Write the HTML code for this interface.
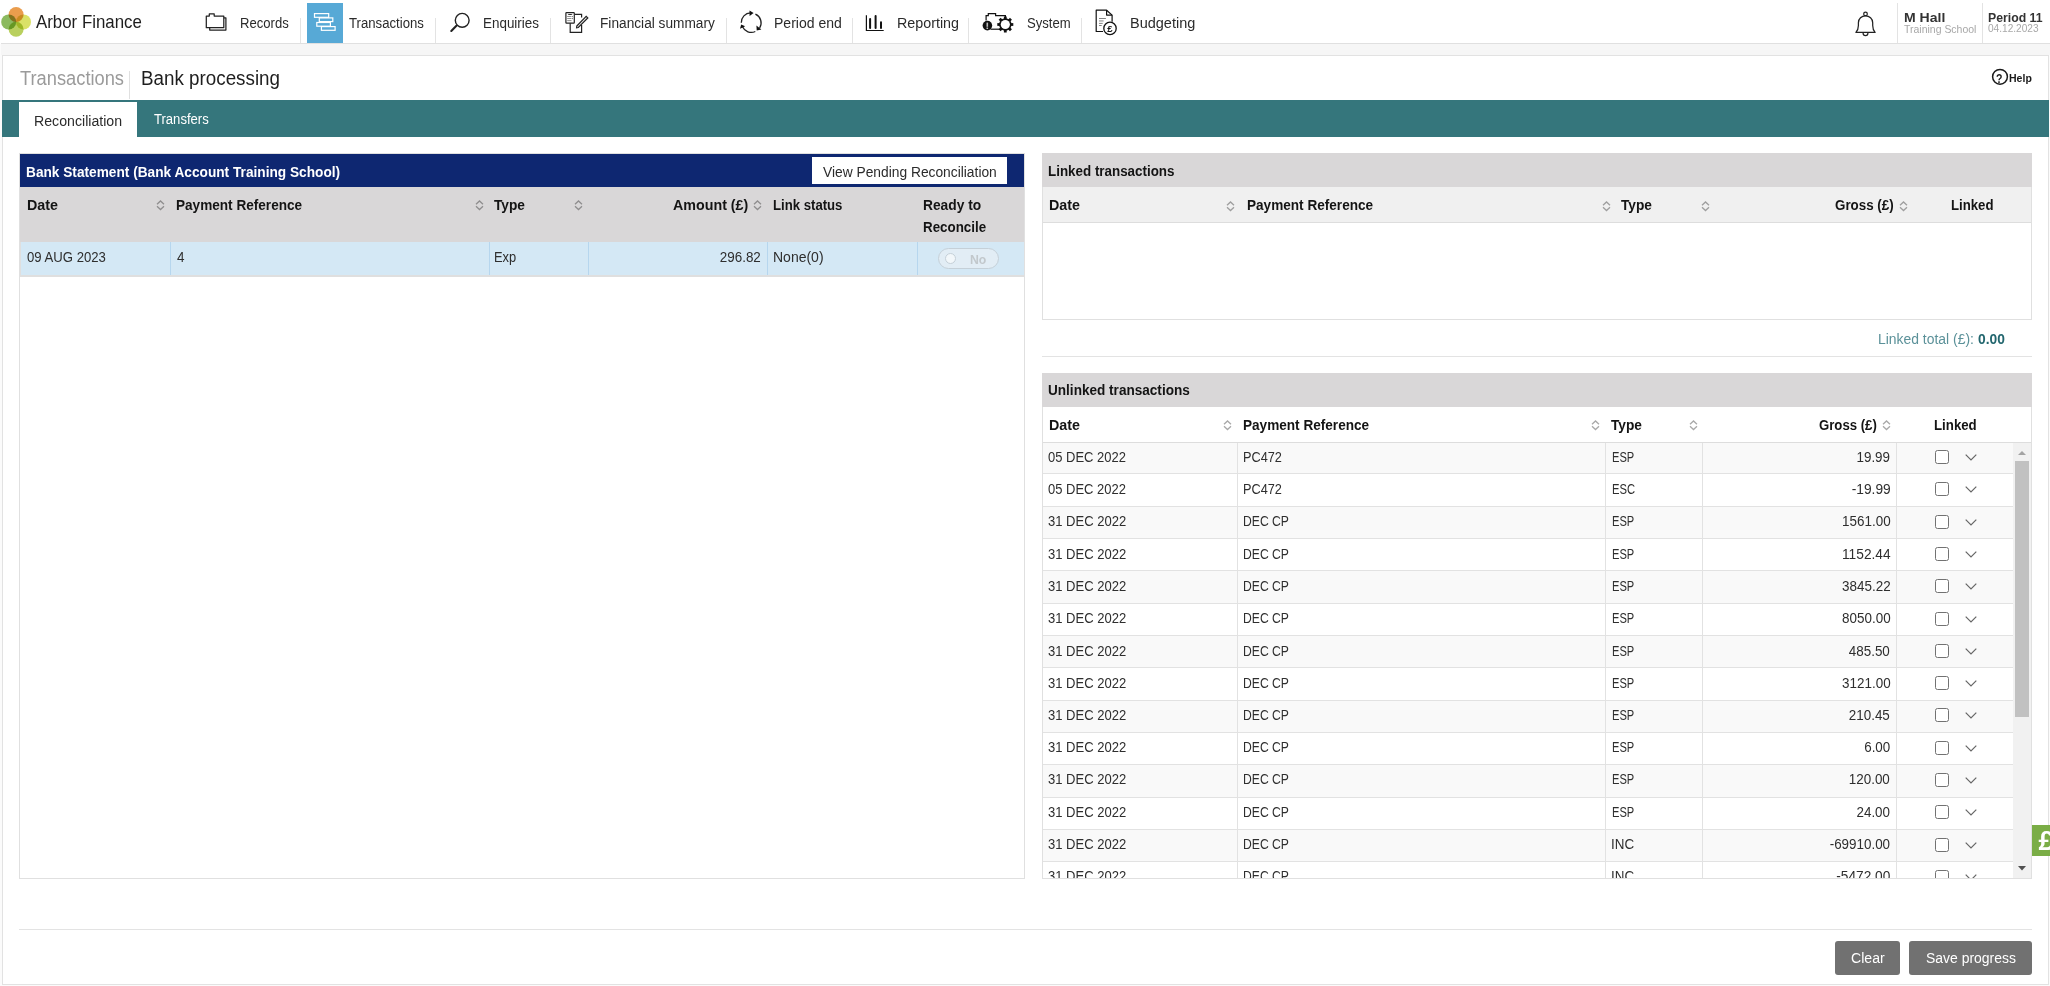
<!DOCTYPE html>
<html><head><meta charset="utf-8"><title>Bank processing</title>
<style>
html,body{margin:0;padding:0;width:2050px;height:986px;overflow:hidden;font-family:'Liberation Sans', sans-serif;}
body{position:relative;background:#ffffff}
</style></head><body>
<div style="position:absolute;left:0px;top:0px;width:2050px;height:43px;background:#ffffff;"></div>
<div style="position:absolute;left:1px;top:43px;width:2049px;height:1px;background:#e0e0e0;"></div>
<svg style="position:absolute;left:0;top:0" width="34" height="40" viewBox="0 0 34 40">
<circle cx="16.1" cy="14.5" r="7.5" fill="#e8923a" style="mix-blend-mode:multiply" fill-opacity="0.9"/>
<circle cx="8.7" cy="21.9" r="7.5" fill="#7fb34e" style="mix-blend-mode:multiply" fill-opacity="0.9"/>
<circle cx="23.5" cy="21.9" r="7.5" fill="#d6de56" style="mix-blend-mode:multiply" fill-opacity="0.9"/>
<circle cx="16.1" cy="29.3" r="7.5" fill="#b1cb4c" style="mix-blend-mode:multiply" fill-opacity="0.9"/>
</svg>
<div style="position:absolute;top:13px;font:400 18.5px/18.5px 'Liberation Sans', sans-serif;color:#1e1e1e;white-space:nowrap;transform:scaleX(0.9111);left:35.60px;transform-origin:0 0;">Arbor Finance</div>
<div style="position:absolute;left:300px;top:18px;width:1px;height:25px;background:#e3e3e3;"></div>
<div style="position:absolute;left:435px;top:18px;width:1px;height:25px;background:#e3e3e3;"></div>
<div style="position:absolute;left:550px;top:18px;width:1px;height:25px;background:#e3e3e3;"></div>
<div style="position:absolute;left:726px;top:18px;width:1px;height:25px;background:#e3e3e3;"></div>
<div style="position:absolute;left:852px;top:18px;width:1px;height:25px;background:#e3e3e3;"></div>
<div style="position:absolute;left:968px;top:18px;width:1px;height:25px;background:#e3e3e3;"></div>
<div style="position:absolute;left:1081px;top:18px;width:1px;height:25px;background:#e3e3e3;"></div>
<div style="position:absolute;left:307px;top:3px;width:36px;height:40px;background:#57a9d6;"></div>
<div style="position:absolute;top:16px;font:400 14px/14px 'Liberation Sans', sans-serif;color:#2b2b2b;white-space:nowrap;transform:scaleX(0.9349);left:239.97px;transform-origin:0 0;">Records</div>
<div style="position:absolute;top:16px;font:400 14px/14px 'Liberation Sans', sans-serif;color:#2b2b2b;white-space:nowrap;transform:scaleX(0.9407);left:348.50px;transform-origin:0 0;">Transactions</div>
<div style="position:absolute;top:16px;font:400 14px/14px 'Liberation Sans', sans-serif;color:#2b2b2b;white-space:nowrap;transform:scaleX(0.9588);left:483.04px;transform-origin:0 0;">Enquiries</div>
<div style="position:absolute;top:16px;font:400 14px/14px 'Liberation Sans', sans-serif;color:#2b2b2b;white-space:nowrap;transform:scaleX(0.9779);left:600.22px;transform-origin:0 0;">Financial summary</div>
<div style="position:absolute;top:16px;font:400 14px/14px 'Liberation Sans', sans-serif;color:#2b2b2b;white-space:nowrap;transform:scaleX(1.0011);left:773.50px;transform-origin:0 0;">Period end</div>
<div style="position:absolute;top:16px;font:400 14px/14px 'Liberation Sans', sans-serif;color:#2b2b2b;white-space:nowrap;transform:scaleX(1.0218);left:896.58px;transform-origin:0 0;">Reporting</div>
<div style="position:absolute;top:16px;font:400 14px/14px 'Liberation Sans', sans-serif;color:#2b2b2b;white-space:nowrap;transform:scaleX(0.9367);left:1027.20px;transform-origin:0 0;">System</div>
<div style="position:absolute;top:16px;font:400 14px/14px 'Liberation Sans', sans-serif;color:#2b2b2b;white-space:nowrap;transform:scaleX(1.0348);left:1129.57px;transform-origin:0 0;">Budgeting</div>
<div style="position:absolute;left:1897px;top:3px;width:1px;height:40px;background:#e3e3e3;"></div>
<div style="position:absolute;left:1982px;top:3px;width:1px;height:40px;background:#e3e3e3;"></div>
<div style="position:absolute;top:11px;font:700 13.5px/13.5px 'Liberation Sans', sans-serif;color:#333;white-space:nowrap;transform:scaleX(1.0383);left:1904.00px;transform-origin:0 0;">M Hall</div>
<div style="position:absolute;top:24px;font:400 11px/11px 'Liberation Sans', sans-serif;color:#a8a8a8;white-space:nowrap;transform:scaleX(0.9527);left:1904.00px;transform-origin:0 0;">Training School</div>
<div style="position:absolute;top:11px;font:700 13.5px/13.5px 'Liberation Sans', sans-serif;color:#333;white-space:nowrap;transform:scaleX(0.9087);left:1988.30px;transform-origin:0 0;">Period 11</div>
<div style="position:absolute;top:23px;font:400 10.5px/10.5px 'Liberation Sans', sans-serif;color:#a8a8a8;white-space:nowrap;transform:scaleX(0.9618);left:1988.30px;transform-origin:0 0;">04.12.2023</div>
<div style="position:absolute;left:0px;top:44px;width:2050px;height:942px;background:#fbfbfb;"></div>
<div style="position:absolute;left:1px;top:44px;width:2049px;height:11px;background:#f6f6f6;"></div>
<div style="position:absolute;left:2px;top:55px;width:2047px;height:930px;background:#ffffff;box-sizing:border-box;border:1px solid #e2e2e2"></div>
<div style="position:absolute;top:68px;font:400 20px/20px 'Liberation Sans', sans-serif;color:#9b9b9b;white-space:nowrap;transform:scaleX(0.9143);left:19.50px;transform-origin:0 0;">Transactions</div>
<div style="position:absolute;left:129px;top:71px;width:1px;height:28px;background:#e0e0e0;"></div>
<div style="position:absolute;top:68px;font:400 20px/20px 'Liberation Sans', sans-serif;color:#1e1e1e;white-space:nowrap;transform:scaleX(0.9400);left:141.46px;transform-origin:0 0;">Bank processing</div>
<svg style="position:absolute;left:1990px;top:66px" width="20" height="21" viewBox="0 0 20 21"><circle cx="10" cy="10.8" r="7.4" fill="none" stroke="#1a1a1a" stroke-width="1.5"/></svg>
<div style="position:absolute;top:71.5px;font:700 13px/13px 'Liberation Sans', sans-serif;color:#1a1a1a;white-space:nowrap;transform:scaleX(0.8125);left:1996.30px;transform-origin:0 0;">?</div>
<div style="position:absolute;top:73px;font:700 11px/11px 'Liberation Sans', sans-serif;color:#1a1a1a;white-space:nowrap;transform:scaleX(0.9578);left:2008.50px;transform-origin:0 0;">Help</div>
<div style="position:absolute;left:2px;top:100px;width:2047px;height:37px;background:#35767c;"></div>
<div style="position:absolute;left:19px;top:102px;width:118px;height:35px;background:#ffffff;"></div>
<div style="position:absolute;top:114px;font:400 14px/14px 'Liberation Sans', sans-serif;color:#2b2b2b;white-space:nowrap;transform:scaleX(1.0109);left:34.29px;transform-origin:0 0;">Reconciliation</div>
<div style="position:absolute;top:112px;font:400 14px/14px 'Liberation Sans', sans-serif;color:#ffffff;white-space:nowrap;transform:scaleX(0.9334);left:154.40px;transform-origin:0 0;">Transfers</div>
<div style="position:absolute;left:19px;top:153px;width:1006px;height:726px;background:#ffffff;box-sizing:border-box;border:1px solid #e0e0e0"></div>
<div style="position:absolute;left:20px;top:154px;width:1004px;height:33px;background:#0e2771;"></div>
<div style="position:absolute;top:165px;font:700 14px/14px 'Liberation Sans', sans-serif;color:#ffffff;white-space:nowrap;transform:scaleX(0.9770);left:25.90px;transform-origin:0 0;">Bank Statement (Bank Account Training School)</div>
<div style="position:absolute;left:812px;top:157px;width:195px;height:27px;background:#ffffff;"></div>
<div style="position:absolute;top:165px;font:400 14px/14px 'Liberation Sans', sans-serif;color:#2b2b2b;white-space:nowrap;transform:scaleX(0.9851);left:823.30px;transform-origin:0 0;">View Pending Reconciliation</div>
<div style="position:absolute;left:20px;top:187px;width:1004px;height:55px;background:#d9d7d8;"></div>
<div style="position:absolute;top:198px;font:700 14px/14px 'Liberation Sans', sans-serif;color:#141414;white-space:nowrap;transform:scaleX(1.0211);left:26.90px;transform-origin:0 0;">Date</div>
<div style="position:absolute;top:198px;font:700 14px/14px 'Liberation Sans', sans-serif;color:#141414;white-space:nowrap;transform:scaleX(0.9703);left:175.80px;transform-origin:0 0;">Payment Reference</div>
<div style="position:absolute;top:198px;font:700 14px/14px 'Liberation Sans', sans-serif;color:#141414;white-space:nowrap;transform:scaleX(0.9796);left:494.00px;transform-origin:0 0;">Type</div>
<div style="position:absolute;top:198px;font:700 14px/14px 'Liberation Sans', sans-serif;color:#141414;white-space:nowrap;transform:scaleX(1.0189);left:672.70px;transform-origin:0 0;">Amount (£)</div>
<div style="position:absolute;top:198px;font:700 14px/14px 'Liberation Sans', sans-serif;color:#141414;white-space:nowrap;transform:scaleX(0.9394);left:772.80px;transform-origin:0 0;">Link status</div>
<div style="position:absolute;top:198px;font:700 14px/14px 'Liberation Sans', sans-serif;color:#141414;white-space:nowrap;transform:scaleX(0.9843);left:922.70px;transform-origin:0 0;">Ready to</div>
<div style="position:absolute;top:220px;font:700 14px/14px 'Liberation Sans', sans-serif;color:#141414;white-space:nowrap;transform:scaleX(0.9539);left:922.70px;transform-origin:0 0;">Reconcile</div>
<svg style="position:absolute;left:155.8px;top:200px" width="9" height="11" viewBox="0 0 9 11"><path d="M1 4.3 L4.5 1 L8 4.3 M1 6.3 L4.5 9.5 L8 6.3" fill="none" stroke="rgba(0,0,0,0.34)" stroke-width="1.3"/></svg>
<svg style="position:absolute;left:475.0px;top:200px" width="9" height="11" viewBox="0 0 9 11"><path d="M1 4.3 L4.5 1 L8 4.3 M1 6.3 L4.5 9.5 L8 6.3" fill="none" stroke="rgba(0,0,0,0.34)" stroke-width="1.3"/></svg>
<svg style="position:absolute;left:574.2px;top:200px" width="9" height="11" viewBox="0 0 9 11"><path d="M1 4.3 L4.5 1 L8 4.3 M1 6.3 L4.5 9.5 L8 6.3" fill="none" stroke="rgba(0,0,0,0.34)" stroke-width="1.3"/></svg>
<svg style="position:absolute;left:753.0px;top:200px" width="9" height="11" viewBox="0 0 9 11"><path d="M1 4.3 L4.5 1 L8 4.3 M1 6.3 L4.5 9.5 L8 6.3" fill="none" stroke="rgba(0,0,0,0.34)" stroke-width="1.3"/></svg>
<div style="position:absolute;left:20px;top:242px;width:1004px;height:33px;background:#d4e8f5;"></div>
<div style="position:absolute;left:20px;top:275px;width:1004px;height:2px;background:#dfdfdf;"></div>
<div style="position:absolute;left:20px;top:242px;width:1px;height:35px;background:#dfdfdf;"></div>
<div style="position:absolute;left:170px;top:242px;width:1px;height:33px;background:#b6d6ee;"></div>
<div style="position:absolute;left:489px;top:242px;width:1px;height:33px;background:#b6d6ee;"></div>
<div style="position:absolute;left:588px;top:242px;width:1px;height:33px;background:#b6d6ee;"></div>
<div style="position:absolute;left:767px;top:242px;width:1px;height:33px;background:#b6d6ee;"></div>
<div style="position:absolute;left:917px;top:242px;width:1px;height:33px;background:#b6d6ee;"></div>
<div style="position:absolute;top:250px;font:400 14px/14px 'Liberation Sans', sans-serif;color:#2e2e2e;white-space:nowrap;transform:scaleX(0.9383);left:26.50px;transform-origin:0 0;">09 AUG 2023</div>
<div style="position:absolute;top:250px;font:400 14px/14px 'Liberation Sans', sans-serif;color:#2e2e2e;white-space:nowrap;transform:scaleX(0.9638);left:176.50px;transform-origin:0 0;">4</div>
<div style="position:absolute;top:250px;font:400 14px/14px 'Liberation Sans', sans-serif;color:#2e2e2e;white-space:nowrap;transform:scaleX(0.9198);left:494.38px;transform-origin:0 0;">Exp</div>
<div style="position:absolute;top:250px;font:400 14px/14px 'Liberation Sans', sans-serif;color:#2e2e2e;white-space:nowrap;transform:scaleX(0.9586);left:717.97px;transform-origin:42.82px 0;">296.82</div>
<div style="position:absolute;top:250px;font:400 14px/14px 'Liberation Sans', sans-serif;color:#2e2e2e;white-space:nowrap;transform:scaleX(0.9997);left:772.70px;transform-origin:0 0;">None(0)</div>
<div style="position:absolute;left:938px;top:248px;width:61px;height:21px;box-sizing:border-box;border:1px solid #c5d0d8;border-radius:10.5px;background:#e2edf5"></div>
<div style="position:absolute;left:944.5px;top:253px;width:11px;height:11px;box-sizing:border-box;border:1px solid #c5d0d8;border-radius:50%;background:#f2f7fa"></div>
<div style="position:absolute;top:253px;font:700 13px/13px 'Liberation Sans', sans-serif;color:#c2c8cc;white-space:nowrap;transform:scaleX(0.9432);left:970.20px;transform-origin:0 0;">No</div>
<div style="position:absolute;left:1042px;top:153px;width:990px;height:167px;background:#ffffff;box-sizing:border-box;border:1px solid #e0e0e0"></div>
<div style="position:absolute;left:1042px;top:153px;width:990px;height:34px;background:#d9d7d8;"></div>
<div style="position:absolute;top:164px;font:700 14px/14px 'Liberation Sans', sans-serif;color:#141414;white-space:nowrap;transform:scaleX(0.9565);left:1047.50px;transform-origin:0 0;">Linked transactions</div>
<div style="position:absolute;left:1043px;top:187px;width:988px;height:35px;background:#f0f0f0;"></div>
<div style="position:absolute;left:1043px;top:222px;width:988px;height:1px;background:#dddddd;"></div>
<div style="position:absolute;top:198px;font:700 14px/14px 'Liberation Sans', sans-serif;color:#141414;white-space:nowrap;transform:scaleX(1.0211);left:1048.70px;transform-origin:0 0;">Date</div>
<div style="position:absolute;top:198px;font:700 14px/14px 'Liberation Sans', sans-serif;color:#141414;white-space:nowrap;transform:scaleX(0.9703);left:1246.50px;transform-origin:0 0;">Payment Reference</div>
<div style="position:absolute;top:198px;font:700 14px/14px 'Liberation Sans', sans-serif;color:#141414;white-space:nowrap;transform:scaleX(0.9796);left:1621.40px;transform-origin:0 0;">Type</div>
<div style="position:absolute;top:198px;font:700 14px/14px 'Liberation Sans', sans-serif;color:#141414;white-space:nowrap;transform:scaleX(0.9540);left:1834.50px;transform-origin:0 0;">Gross (£)</div>
<div style="position:absolute;top:198px;font:700 14px/14px 'Liberation Sans', sans-serif;color:#141414;white-space:nowrap;transform:scaleX(0.9424);left:1951.00px;transform-origin:0 0;">Linked</div>
<svg style="position:absolute;left:1225.9px;top:200.5px" width="9" height="11" viewBox="0 0 9 11"><path d="M1 4.3 L4.5 1 L8 4.3 M1 6.3 L4.5 9.5 L8 6.3" fill="none" stroke="rgba(0,0,0,0.34)" stroke-width="1.3"/></svg>
<svg style="position:absolute;left:1602.3px;top:200.5px" width="9" height="11" viewBox="0 0 9 11"><path d="M1 4.3 L4.5 1 L8 4.3 M1 6.3 L4.5 9.5 L8 6.3" fill="none" stroke="rgba(0,0,0,0.34)" stroke-width="1.3"/></svg>
<svg style="position:absolute;left:1701.4px;top:200.5px" width="9" height="11" viewBox="0 0 9 11"><path d="M1 4.3 L4.5 1 L8 4.3 M1 6.3 L4.5 9.5 L8 6.3" fill="none" stroke="rgba(0,0,0,0.34)" stroke-width="1.3"/></svg>
<svg style="position:absolute;left:1898.7px;top:200.5px" width="9" height="11" viewBox="0 0 9 11"><path d="M1 4.3 L4.5 1 L8 4.3 M1 6.3 L4.5 9.5 L8 6.3" fill="none" stroke="rgba(0,0,0,0.34)" stroke-width="1.3"/></svg>
<div style="position:absolute;top:332px;font:400 14px/14px 'Liberation Sans', sans-serif;color:#5b9199;white-space:nowrap;transform:scaleX(0.9936);left:1877.81px;transform-origin:0 0;">Linked total (£):</div>
<div style="position:absolute;top:332px;font:700 14px/14px 'Liberation Sans', sans-serif;color:#22666e;white-space:nowrap;transform:scaleX(0.9832);left:1977.50px;transform-origin:0 0;">0.00</div>
<div style="position:absolute;left:1042px;top:356px;width:990px;height:1px;background:#e3e3e3;"></div>
<div style="position:absolute;left:1042px;top:373px;width:990px;height:506px;background:#ffffff;box-sizing:border-box;border:1px solid #e0e0e0"></div>
<div style="position:absolute;left:1042px;top:373px;width:990px;height:34px;background:#d9d7d8;"></div>
<div style="position:absolute;top:383px;font:700 14px/14px 'Liberation Sans', sans-serif;color:#141414;white-space:nowrap;transform:scaleX(0.9695);left:1047.80px;transform-origin:0 0;">Unlinked transactions</div>
<div style="position:absolute;left:1043px;top:442px;width:988px;height:1px;background:#dddddd;"></div>
<div style="position:absolute;top:418px;font:700 14px/14px 'Liberation Sans', sans-serif;color:#141414;white-space:nowrap;transform:scaleX(1.0211);left:1048.70px;transform-origin:0 0;">Date</div>
<div style="position:absolute;top:418px;font:700 14px/14px 'Liberation Sans', sans-serif;color:#141414;white-space:nowrap;transform:scaleX(0.9703);left:1243.10px;transform-origin:0 0;">Payment Reference</div>
<div style="position:absolute;top:418px;font:700 14px/14px 'Liberation Sans', sans-serif;color:#141414;white-space:nowrap;transform:scaleX(0.9796);left:1611.10px;transform-origin:0 0;">Type</div>
<div style="position:absolute;top:418px;font:700 14px/14px 'Liberation Sans', sans-serif;color:#141414;white-space:nowrap;transform:scaleX(0.9408);left:1818.70px;transform-origin:0 0;">Gross (£)</div>
<div style="position:absolute;top:418px;font:700 14px/14px 'Liberation Sans', sans-serif;color:#141414;white-space:nowrap;transform:scaleX(0.9469);left:1933.80px;transform-origin:0 0;">Linked</div>
<svg style="position:absolute;left:1222.7px;top:420.3px" width="9" height="11" viewBox="0 0 9 11"><path d="M1 4.3 L4.5 1 L8 4.3 M1 6.3 L4.5 9.5 L8 6.3" fill="none" stroke="rgba(0,0,0,0.34)" stroke-width="1.3"/></svg>
<svg style="position:absolute;left:1591.4px;top:420.3px" width="9" height="11" viewBox="0 0 9 11"><path d="M1 4.3 L4.5 1 L8 4.3 M1 6.3 L4.5 9.5 L8 6.3" fill="none" stroke="rgba(0,0,0,0.34)" stroke-width="1.3"/></svg>
<svg style="position:absolute;left:1688.5px;top:420.3px" width="9" height="11" viewBox="0 0 9 11"><path d="M1 4.3 L4.5 1 L8 4.3 M1 6.3 L4.5 9.5 L8 6.3" fill="none" stroke="rgba(0,0,0,0.34)" stroke-width="1.3"/></svg>
<svg style="position:absolute;left:1882.3px;top:420.3px" width="9" height="11" viewBox="0 0 9 11"><path d="M1 4.3 L4.5 1 L8 4.3 M1 6.3 L4.5 9.5 L8 6.3" fill="none" stroke="rgba(0,0,0,0.34)" stroke-width="1.3"/></svg>
<div style="position:absolute;left:0;top:443px;width:2050px;height:435px;overflow:hidden">
<div style="position:absolute;left:1043px;top:0px;width:970px;height:30px;background:#f9f9f9"></div>
<div style="position:absolute;left:1043px;top:30px;width:970px;height:1px;background:#e2e2e2"></div>
<div style="position:absolute;left:1043px;top:31px;width:970px;height:32px;background:#ffffff"></div>
<div style="position:absolute;left:1043px;top:63px;width:970px;height:1px;background:#e2e2e2"></div>
<div style="position:absolute;left:1043px;top:64px;width:970px;height:31px;background:#f9f9f9"></div>
<div style="position:absolute;left:1043px;top:95px;width:970px;height:1px;background:#e2e2e2"></div>
<div style="position:absolute;left:1043px;top:96px;width:970px;height:31px;background:#ffffff"></div>
<div style="position:absolute;left:1043px;top:127px;width:970px;height:1px;background:#e2e2e2"></div>
<div style="position:absolute;left:1043px;top:128px;width:970px;height:32px;background:#f9f9f9"></div>
<div style="position:absolute;left:1043px;top:160px;width:970px;height:1px;background:#e2e2e2"></div>
<div style="position:absolute;left:1043px;top:161px;width:970px;height:31px;background:#ffffff"></div>
<div style="position:absolute;left:1043px;top:192px;width:970px;height:1px;background:#e2e2e2"></div>
<div style="position:absolute;left:1043px;top:193px;width:970px;height:31px;background:#f9f9f9"></div>
<div style="position:absolute;left:1043px;top:224px;width:970px;height:1px;background:#e2e2e2"></div>
<div style="position:absolute;left:1043px;top:225px;width:970px;height:32px;background:#ffffff"></div>
<div style="position:absolute;left:1043px;top:257px;width:970px;height:1px;background:#e2e2e2"></div>
<div style="position:absolute;left:1043px;top:258px;width:970px;height:31px;background:#f9f9f9"></div>
<div style="position:absolute;left:1043px;top:289px;width:970px;height:1px;background:#e2e2e2"></div>
<div style="position:absolute;left:1043px;top:290px;width:970px;height:31px;background:#ffffff"></div>
<div style="position:absolute;left:1043px;top:321px;width:970px;height:1px;background:#e2e2e2"></div>
<div style="position:absolute;left:1043px;top:322px;width:970px;height:32px;background:#f9f9f9"></div>
<div style="position:absolute;left:1043px;top:354px;width:970px;height:1px;background:#e2e2e2"></div>
<div style="position:absolute;left:1043px;top:355px;width:970px;height:31px;background:#ffffff"></div>
<div style="position:absolute;left:1043px;top:386px;width:970px;height:1px;background:#e2e2e2"></div>
<div style="position:absolute;left:1043px;top:387px;width:970px;height:31px;background:#f9f9f9"></div>
<div style="position:absolute;left:1043px;top:418px;width:970px;height:1px;background:#e2e2e2"></div>
<div style="position:absolute;left:1043px;top:419px;width:970px;height:32px;background:#ffffff"></div>
<div style="position:absolute;left:1043px;top:451px;width:970px;height:1px;background:#e2e2e2"></div>
<div style="position:absolute;left:1237px;top:0;width:1px;height:435px;background:#e2e2e2"></div>
<div style="position:absolute;left:1605px;top:0;width:1px;height:435px;background:#e2e2e2"></div>
<div style="position:absolute;left:1702px;top:0;width:1px;height:435px;background:#e2e2e2"></div>
<div style="position:absolute;left:1896px;top:0;width:1px;height:435px;background:#e2e2e2"></div>
<div style="position:absolute;top:7px;font:400 14px/14px 'Liberation Sans', sans-serif;color:#2e2e2e;white-space:nowrap;transform:scaleX(0.9268);left:1048.10px;transform-origin:0 0;">05 DEC 2022</div>
<div style="position:absolute;top:7px;font:400 14px/14px 'Liberation Sans', sans-serif;color:#2e2e2e;white-space:nowrap;transform:scaleX(0.9091);left:1242.79px;transform-origin:0 0;">PC472</div>
<div style="position:absolute;top:7px;font:400 14px/14px 'Liberation Sans', sans-serif;color:#2e2e2e;white-space:nowrap;transform:scaleX(0.7947);left:1611.51px;transform-origin:0 0;">ESP</div>
<div style="position:absolute;top:7px;font:400 14px/14px 'Liberation Sans', sans-serif;color:#2e2e2e;white-space:nowrap;transform:scaleX(0.9575);left:1855.26px;transform-origin:35.03px 0;">19.99</div>
<div style="position:absolute;left:1935px;top:7px;width:14px;height:14px;box-sizing:border-box;border:1px solid #727272;border-radius:2.5px;background:#fff"></div>
<svg style="position:absolute;left:1964.5px;top:11.00px" width="12" height="7" viewBox="0 0 12 7"><path d="M0.7 0.7 L6 6 L11.3 0.7" fill="none" stroke="#666" stroke-width="1.2"/></svg>
<div style="position:absolute;top:39px;font:400 14px/14px 'Liberation Sans', sans-serif;color:#2e2e2e;white-space:nowrap;transform:scaleX(0.9268);left:1048.10px;transform-origin:0 0;">05 DEC 2022</div>
<div style="position:absolute;top:39px;font:400 14px/14px 'Liberation Sans', sans-serif;color:#2e2e2e;white-space:nowrap;transform:scaleX(0.9091);left:1242.79px;transform-origin:0 0;">PC472</div>
<div style="position:absolute;top:39px;font:400 14px/14px 'Liberation Sans', sans-serif;color:#2e2e2e;white-space:nowrap;transform:scaleX(0.8020);left:1611.50px;transform-origin:0 0;">ESC</div>
<div style="position:absolute;top:39px;font:400 14px/14px 'Liberation Sans', sans-serif;color:#2e2e2e;white-space:nowrap;transform:scaleX(0.9826);left:1850.59px;transform-origin:39.70px 0;">-19.99</div>
<div style="position:absolute;left:1935px;top:39px;width:14px;height:14px;box-sizing:border-box;border:1px solid #727272;border-radius:2.5px;background:#fff"></div>
<svg style="position:absolute;left:1964.5px;top:43.30px" width="12" height="7" viewBox="0 0 12 7"><path d="M0.7 0.7 L6 6 L11.3 0.7" fill="none" stroke="#666" stroke-width="1.2"/></svg>
<div style="position:absolute;top:71px;font:400 14px/14px 'Liberation Sans', sans-serif;color:#2e2e2e;white-space:nowrap;transform:scaleX(0.9311);left:1048.10px;transform-origin:0 0;">31 DEC 2022</div>
<div style="position:absolute;top:71px;font:400 14px/14px 'Liberation Sans', sans-serif;color:#2e2e2e;white-space:nowrap;transform:scaleX(0.8686);left:1242.83px;transform-origin:0 0;">DEC CP</div>
<div style="position:absolute;top:71px;font:400 14px/14px 'Liberation Sans', sans-serif;color:#2e2e2e;white-space:nowrap;transform:scaleX(0.7947);left:1611.51px;transform-origin:0 0;">ESP</div>
<div style="position:absolute;top:71px;font:400 14px/14px 'Liberation Sans', sans-serif;color:#2e2e2e;white-space:nowrap;transform:scaleX(0.9594);left:1839.69px;transform-origin:50.61px 0;">1561.00</div>
<div style="position:absolute;left:1935px;top:72px;width:14px;height:14px;box-sizing:border-box;border:1px solid #727272;border-radius:2.5px;background:#fff"></div>
<svg style="position:absolute;left:1964.5px;top:75.60px" width="12" height="7" viewBox="0 0 12 7"><path d="M0.7 0.7 L6 6 L11.3 0.7" fill="none" stroke="#666" stroke-width="1.2"/></svg>
<div style="position:absolute;top:104px;font:400 14px/14px 'Liberation Sans', sans-serif;color:#2e2e2e;white-space:nowrap;transform:scaleX(0.9311);left:1048.10px;transform-origin:0 0;">31 DEC 2022</div>
<div style="position:absolute;top:104px;font:400 14px/14px 'Liberation Sans', sans-serif;color:#2e2e2e;white-space:nowrap;transform:scaleX(0.8686);left:1242.83px;transform-origin:0 0;">DEC CP</div>
<div style="position:absolute;top:104px;font:400 14px/14px 'Liberation Sans', sans-serif;color:#2e2e2e;white-space:nowrap;transform:scaleX(0.7947);left:1611.51px;transform-origin:0 0;">ESP</div>
<div style="position:absolute;top:104px;font:400 14px/14px 'Liberation Sans', sans-serif;color:#2e2e2e;white-space:nowrap;transform:scaleX(0.9795);left:1840.72px;transform-origin:49.57px 0;">1152.44</div>
<div style="position:absolute;left:1935px;top:104px;width:14px;height:14px;box-sizing:border-box;border:1px solid #727272;border-radius:2.5px;background:#fff"></div>
<svg style="position:absolute;left:1964.5px;top:107.90px" width="12" height="7" viewBox="0 0 12 7"><path d="M0.7 0.7 L6 6 L11.3 0.7" fill="none" stroke="#666" stroke-width="1.2"/></svg>
<div style="position:absolute;top:136px;font:400 14px/14px 'Liberation Sans', sans-serif;color:#2e2e2e;white-space:nowrap;transform:scaleX(0.9311);left:1048.10px;transform-origin:0 0;">31 DEC 2022</div>
<div style="position:absolute;top:136px;font:400 14px/14px 'Liberation Sans', sans-serif;color:#2e2e2e;white-space:nowrap;transform:scaleX(0.8686);left:1242.83px;transform-origin:0 0;">DEC CP</div>
<div style="position:absolute;top:136px;font:400 14px/14px 'Liberation Sans', sans-serif;color:#2e2e2e;white-space:nowrap;transform:scaleX(0.7947);left:1611.51px;transform-origin:0 0;">ESP</div>
<div style="position:absolute;top:136px;font:400 14px/14px 'Liberation Sans', sans-serif;color:#2e2e2e;white-space:nowrap;transform:scaleX(0.9594);left:1839.69px;transform-origin:50.61px 0;">3845.22</div>
<div style="position:absolute;left:1935px;top:136px;width:14px;height:14px;box-sizing:border-box;border:1px solid #727272;border-radius:2.5px;background:#fff"></div>
<svg style="position:absolute;left:1964.5px;top:140.20px" width="12" height="7" viewBox="0 0 12 7"><path d="M0.7 0.7 L6 6 L11.3 0.7" fill="none" stroke="#666" stroke-width="1.2"/></svg>
<div style="position:absolute;top:168px;font:400 14px/14px 'Liberation Sans', sans-serif;color:#2e2e2e;white-space:nowrap;transform:scaleX(0.9311);left:1048.10px;transform-origin:0 0;">31 DEC 2022</div>
<div style="position:absolute;top:168px;font:400 14px/14px 'Liberation Sans', sans-serif;color:#2e2e2e;white-space:nowrap;transform:scaleX(0.8686);left:1242.83px;transform-origin:0 0;">DEC CP</div>
<div style="position:absolute;top:168px;font:400 14px/14px 'Liberation Sans', sans-serif;color:#2e2e2e;white-space:nowrap;transform:scaleX(0.7947);left:1611.51px;transform-origin:0 0;">ESP</div>
<div style="position:absolute;top:168px;font:400 14px/14px 'Liberation Sans', sans-serif;color:#2e2e2e;white-space:nowrap;transform:scaleX(0.9594);left:1839.69px;transform-origin:50.61px 0;">8050.00</div>
<div style="position:absolute;left:1935px;top:169px;width:14px;height:14px;box-sizing:border-box;border:1px solid #727272;border-radius:2.5px;background:#fff"></div>
<svg style="position:absolute;left:1964.5px;top:172.50px" width="12" height="7" viewBox="0 0 12 7"><path d="M0.7 0.7 L6 6 L11.3 0.7" fill="none" stroke="#666" stroke-width="1.2"/></svg>
<div style="position:absolute;top:201px;font:400 14px/14px 'Liberation Sans', sans-serif;color:#2e2e2e;white-space:nowrap;transform:scaleX(0.9311);left:1048.10px;transform-origin:0 0;">31 DEC 2022</div>
<div style="position:absolute;top:201px;font:400 14px/14px 'Liberation Sans', sans-serif;color:#2e2e2e;white-space:nowrap;transform:scaleX(0.8686);left:1242.83px;transform-origin:0 0;">DEC CP</div>
<div style="position:absolute;top:201px;font:400 14px/14px 'Liberation Sans', sans-serif;color:#2e2e2e;white-space:nowrap;transform:scaleX(0.7947);left:1611.51px;transform-origin:0 0;">ESP</div>
<div style="position:absolute;top:201px;font:400 14px/14px 'Liberation Sans', sans-serif;color:#2e2e2e;white-space:nowrap;transform:scaleX(0.9586);left:1847.47px;transform-origin:42.82px 0;">485.50</div>
<div style="position:absolute;left:1935px;top:201px;width:14px;height:14px;box-sizing:border-box;border:1px solid #727272;border-radius:2.5px;background:#fff"></div>
<svg style="position:absolute;left:1964.5px;top:204.80px" width="12" height="7" viewBox="0 0 12 7"><path d="M0.7 0.7 L6 6 L11.3 0.7" fill="none" stroke="#666" stroke-width="1.2"/></svg>
<div style="position:absolute;top:233px;font:400 14px/14px 'Liberation Sans', sans-serif;color:#2e2e2e;white-space:nowrap;transform:scaleX(0.9311);left:1048.10px;transform-origin:0 0;">31 DEC 2022</div>
<div style="position:absolute;top:233px;font:400 14px/14px 'Liberation Sans', sans-serif;color:#2e2e2e;white-space:nowrap;transform:scaleX(0.8686);left:1242.83px;transform-origin:0 0;">DEC CP</div>
<div style="position:absolute;top:233px;font:400 14px/14px 'Liberation Sans', sans-serif;color:#2e2e2e;white-space:nowrap;transform:scaleX(0.7947);left:1611.51px;transform-origin:0 0;">ESP</div>
<div style="position:absolute;top:233px;font:400 14px/14px 'Liberation Sans', sans-serif;color:#2e2e2e;white-space:nowrap;transform:scaleX(0.9594);left:1839.69px;transform-origin:50.61px 0;">3121.00</div>
<div style="position:absolute;left:1935px;top:233px;width:14px;height:14px;box-sizing:border-box;border:1px solid #727272;border-radius:2.5px;background:#fff"></div>
<svg style="position:absolute;left:1964.5px;top:237.10px" width="12" height="7" viewBox="0 0 12 7"><path d="M0.7 0.7 L6 6 L11.3 0.7" fill="none" stroke="#666" stroke-width="1.2"/></svg>
<div style="position:absolute;top:265px;font:400 14px/14px 'Liberation Sans', sans-serif;color:#2e2e2e;white-space:nowrap;transform:scaleX(0.9311);left:1048.10px;transform-origin:0 0;">31 DEC 2022</div>
<div style="position:absolute;top:265px;font:400 14px/14px 'Liberation Sans', sans-serif;color:#2e2e2e;white-space:nowrap;transform:scaleX(0.8686);left:1242.83px;transform-origin:0 0;">DEC CP</div>
<div style="position:absolute;top:265px;font:400 14px/14px 'Liberation Sans', sans-serif;color:#2e2e2e;white-space:nowrap;transform:scaleX(0.7947);left:1611.51px;transform-origin:0 0;">ESP</div>
<div style="position:absolute;top:265px;font:400 14px/14px 'Liberation Sans', sans-serif;color:#2e2e2e;white-space:nowrap;transform:scaleX(0.9586);left:1847.47px;transform-origin:42.82px 0;">210.45</div>
<div style="position:absolute;left:1935px;top:265px;width:14px;height:14px;box-sizing:border-box;border:1px solid #727272;border-radius:2.5px;background:#fff"></div>
<svg style="position:absolute;left:1964.5px;top:269.40px" width="12" height="7" viewBox="0 0 12 7"><path d="M0.7 0.7 L6 6 L11.3 0.7" fill="none" stroke="#666" stroke-width="1.2"/></svg>
<div style="position:absolute;top:297px;font:400 14px/14px 'Liberation Sans', sans-serif;color:#2e2e2e;white-space:nowrap;transform:scaleX(0.9311);left:1048.10px;transform-origin:0 0;">31 DEC 2022</div>
<div style="position:absolute;top:297px;font:400 14px/14px 'Liberation Sans', sans-serif;color:#2e2e2e;white-space:nowrap;transform:scaleX(0.8686);left:1242.83px;transform-origin:0 0;">DEC CP</div>
<div style="position:absolute;top:297px;font:400 14px/14px 'Liberation Sans', sans-serif;color:#2e2e2e;white-space:nowrap;transform:scaleX(0.7947);left:1611.51px;transform-origin:0 0;">ESP</div>
<div style="position:absolute;top:297px;font:400 14px/14px 'Liberation Sans', sans-serif;color:#2e2e2e;white-space:nowrap;transform:scaleX(0.9557);left:1863.05px;transform-origin:27.25px 0;">6.00</div>
<div style="position:absolute;left:1935px;top:298px;width:14px;height:14px;box-sizing:border-box;border:1px solid #727272;border-radius:2.5px;background:#fff"></div>
<svg style="position:absolute;left:1964.5px;top:301.70px" width="12" height="7" viewBox="0 0 12 7"><path d="M0.7 0.7 L6 6 L11.3 0.7" fill="none" stroke="#666" stroke-width="1.2"/></svg>
<div style="position:absolute;top:329px;font:400 14px/14px 'Liberation Sans', sans-serif;color:#2e2e2e;white-space:nowrap;transform:scaleX(0.9311);left:1048.10px;transform-origin:0 0;">31 DEC 2022</div>
<div style="position:absolute;top:329px;font:400 14px/14px 'Liberation Sans', sans-serif;color:#2e2e2e;white-space:nowrap;transform:scaleX(0.8686);left:1242.83px;transform-origin:0 0;">DEC CP</div>
<div style="position:absolute;top:329px;font:400 14px/14px 'Liberation Sans', sans-serif;color:#2e2e2e;white-space:nowrap;transform:scaleX(0.7947);left:1611.51px;transform-origin:0 0;">ESP</div>
<div style="position:absolute;top:329px;font:400 14px/14px 'Liberation Sans', sans-serif;color:#2e2e2e;white-space:nowrap;transform:scaleX(0.9586);left:1847.47px;transform-origin:42.82px 0;">120.00</div>
<div style="position:absolute;left:1935px;top:330px;width:14px;height:14px;box-sizing:border-box;border:1px solid #727272;border-radius:2.5px;background:#fff"></div>
<svg style="position:absolute;left:1964.5px;top:334.00px" width="12" height="7" viewBox="0 0 12 7"><path d="M0.7 0.7 L6 6 L11.3 0.7" fill="none" stroke="#666" stroke-width="1.2"/></svg>
<div style="position:absolute;top:362px;font:400 14px/14px 'Liberation Sans', sans-serif;color:#2e2e2e;white-space:nowrap;transform:scaleX(0.9311);left:1048.10px;transform-origin:0 0;">31 DEC 2022</div>
<div style="position:absolute;top:362px;font:400 14px/14px 'Liberation Sans', sans-serif;color:#2e2e2e;white-space:nowrap;transform:scaleX(0.8686);left:1242.83px;transform-origin:0 0;">DEC CP</div>
<div style="position:absolute;top:362px;font:400 14px/14px 'Liberation Sans', sans-serif;color:#2e2e2e;white-space:nowrap;transform:scaleX(0.7947);left:1611.51px;transform-origin:0 0;">ESP</div>
<div style="position:absolute;top:362px;font:400 14px/14px 'Liberation Sans', sans-serif;color:#2e2e2e;white-space:nowrap;transform:scaleX(0.9575);left:1855.26px;transform-origin:35.03px 0;">24.00</div>
<div style="position:absolute;left:1935px;top:362px;width:14px;height:14px;box-sizing:border-box;border:1px solid #727272;border-radius:2.5px;background:#fff"></div>
<svg style="position:absolute;left:1964.5px;top:366.30px" width="12" height="7" viewBox="0 0 12 7"><path d="M0.7 0.7 L6 6 L11.3 0.7" fill="none" stroke="#666" stroke-width="1.2"/></svg>
<div style="position:absolute;top:394px;font:400 14px/14px 'Liberation Sans', sans-serif;color:#2e2e2e;white-space:nowrap;transform:scaleX(0.9311);left:1048.10px;transform-origin:0 0;">31 DEC 2022</div>
<div style="position:absolute;top:394px;font:400 14px/14px 'Liberation Sans', sans-serif;color:#2e2e2e;white-space:nowrap;transform:scaleX(0.8686);left:1242.83px;transform-origin:0 0;">DEC CP</div>
<div style="position:absolute;top:394px;font:400 14px/14px 'Liberation Sans', sans-serif;color:#2e2e2e;white-space:nowrap;transform:scaleX(0.9587);left:1611.34px;transform-origin:0 0;">INC</div>
<div style="position:absolute;top:394px;font:400 14px/14px 'Liberation Sans', sans-serif;color:#2e2e2e;white-space:nowrap;transform:scaleX(0.9578);left:1827.24px;transform-origin:63.05px 0;">-69910.00</div>
<div style="position:absolute;left:1935px;top:395px;width:14px;height:14px;box-sizing:border-box;border:1px solid #727272;border-radius:2.5px;background:#fff"></div>
<svg style="position:absolute;left:1964.5px;top:398.60px" width="12" height="7" viewBox="0 0 12 7"><path d="M0.7 0.7 L6 6 L11.3 0.7" fill="none" stroke="#666" stroke-width="1.2"/></svg>
<div style="position:absolute;top:426px;font:400 14px/14px 'Liberation Sans', sans-serif;color:#2e2e2e;white-space:nowrap;transform:scaleX(0.9311);left:1048.10px;transform-origin:0 0;">31 DEC 2022</div>
<div style="position:absolute;top:426px;font:400 14px/14px 'Liberation Sans', sans-serif;color:#2e2e2e;white-space:nowrap;transform:scaleX(0.8686);left:1242.83px;transform-origin:0 0;">DEC CP</div>
<div style="position:absolute;top:426px;font:400 14px/14px 'Liberation Sans', sans-serif;color:#2e2e2e;white-space:nowrap;transform:scaleX(0.9587);left:1611.34px;transform-origin:0 0;">INC</div>
<div style="position:absolute;top:426px;font:400 14px/14px 'Liberation Sans', sans-serif;color:#2e2e2e;white-space:nowrap;transform:scaleX(0.9773);left:1835.02px;transform-origin:55.27px 0;">-5472.00</div>
<div style="position:absolute;left:1935px;top:427px;width:14px;height:14px;box-sizing:border-box;border:1px solid #727272;border-radius:2.5px;background:#fff"></div>
<svg style="position:absolute;left:1964.5px;top:430.90px" width="12" height="7" viewBox="0 0 12 7"><path d="M0.7 0.7 L6 6 L11.3 0.7" fill="none" stroke="#666" stroke-width="1.2"/></svg>
</div>
<div style="position:absolute;left:2013px;top:443px;width:18px;height:435px;background:#f1f1f1;"></div>
<div style="position:absolute;left:2015px;top:461px;width:14px;height:256px;background:#c1c1c1;"></div>
<svg style="position:absolute;left:2016px;top:449px" width="12" height="8" viewBox="0 0 12 8"><path d="M2 6 L6 2 L10 6 Z" fill="#a3a3a3"/></svg>
<svg style="position:absolute;left:2016px;top:864px" width="12" height="8" viewBox="0 0 12 8"><path d="M2 2 L6 6.5 L10 2 Z" fill="#505050"/></svg>
<div style="position:absolute;left:2032px;top:825px;width:18px;height:31px;background:#7aad46;"></div>
<div style="position:absolute;top:828px;font:700 27px/27px 'Liberation Sans', sans-serif;color:#ffffff;white-space:nowrap;transform:scaleX(1.0000);left:2038.60px;transform-origin:0 0;">£</div>
<div style="position:absolute;left:19px;top:929px;width:2013px;height:1px;background:#e3e3e3;"></div>
<div style="position:absolute;left:1835px;top:941px;width:65px;height:34px;background:#717171;border-radius:3px"></div>
<div style="position:absolute;left:1909px;top:941px;width:123px;height:34px;background:#717171;border-radius:3px"></div>
<div style="position:absolute;top:951px;font:400 14px/14px 'Liberation Sans', sans-serif;color:#ffffff;white-space:nowrap;transform:scaleX(1.0061);left:1851.20px;transform-origin:0 0;">Clear</div>
<div style="position:absolute;top:951px;font:400 14px/14px 'Liberation Sans', sans-serif;color:#ffffff;white-space:nowrap;transform:scaleX(0.9959);left:1925.80px;transform-origin:0 0;">Save progress</div>
<svg style="position:absolute;left:200px;top:5px" width="32" height="32" viewBox="0 0 32 32"><g fill="none" stroke="#222" stroke-width="1.25" stroke-linejoin="round"><path d="M6.3 11 H9.3 V8.9 H14.2 V11 H23.8 V22.7 H6.3 Z"/><path d="M23.8 12.8 H25.9 V25 H9.7 V22.7"/></g></svg>
<svg style="position:absolute;left:305px;top:5px" width="40" height="35" viewBox="0 0 40 35"><g fill="none" stroke="#fff" stroke-width="1.2"><rect x="9.5" y="8.6" width="14.2" height="3.7"/><rect x="14.3" y="12.9" width="13.5" height="3.7"/><rect x="11.8" y="17.5" width="13.6" height="3.7"/><rect x="16.4" y="21.6" width="13.7" height="3.7"/></g></svg>
<svg style="position:absolute;left:445px;top:5px" width="32" height="32" viewBox="0 0 32 32"><circle cx="17.2" cy="15.3" r="6.9" fill="none" stroke="#222" stroke-width="1.4"/><path d="M11.4 20.8 L6.3 25.9" stroke="#222" stroke-width="2.1" stroke-linecap="round"/></svg>
<svg style="position:absolute;left:560px;top:5px" width="32" height="32" viewBox="0 0 32 32"><g fill="none" stroke="#222" stroke-width="1.2"><path d="M14.6 9.4 H21.6 V12.5 M21.6 20 V27.4 H10.2 V18.3"/><rect x="5.9" y="7.6" width="8.4" height="10.5" rx="0.6" fill="#fff"/><path d="M16.8 21 L26.2 11.4 L27.8 13 L18.3 22.5 L16.6 22.8 Z" fill="#eee"/></g><ellipse cx="10.1" cy="9.5" rx="2.4" ry="0.55" fill="#222"/><g fill="#777"><rect x="7.2" y="11.2" width="4.3" height="0.8"/><rect x="7.2" y="13.2" width="4.3" height="0.8"/><rect x="7.2" y="15.3" width="4.3" height="0.8"/><rect x="12" y="11.1" width="1" height="1"/><rect x="12" y="13.1" width="1" height="1"/></g></svg>
<svg style="position:absolute;left:735px;top:5px" width="32" height="32" viewBox="0 0 32 32"><g fill="none" stroke="#222" stroke-width="1.3"><path d="M6.3 17.8 A9.6 9.6 0 0 1 15.6 7.9"/><path d="M20.4 9.2 A9.6 9.6 0 0 1 24.6 23.2"/><path d="M20.3 26.5 A9.6 9.6 0 0 1 7.5 21.7"/></g><g fill="#111"><path d="M14.5 5.4 L18.6 8 L14.6 10.9 Z"/><path d="M21.4 20.6 L26.4 24.4 L21.7 25.5 Z"/><path d="M5 23.8 L6.2 19.5 L10.2 21.3 Z"/></g></svg>
<svg style="position:absolute;left:860px;top:8px" width="30" height="30" viewBox="0 0 30 30"><path d="M6.4 7.3 V22.5 H23.7" fill="none" stroke="#111" stroke-width="1.2"/><g stroke="#111" stroke-width="2" stroke-linecap="round"><path d="M10.1 11 V20"/><path d="M15.6 8 V20"/><path d="M21 14.2 V20"/></g></svg>
<svg style="position:absolute;left:978px;top:6px" width="40" height="32" viewBox="0 0 40 32"><g fill="none" stroke="#111" stroke-width="1.2"><path d="M8.1 14.5 V9.6 H10.3 V7.6 H17.6 V9.6 H27.4 V12.2"/><path d="M12.5 23.2 H22"/></g><circle cx="9.4" cy="19.6" r="4.8" fill="#111"/><rect x="8.5" y="16.6" width="1.6" height="4.2" fill="#bbb"/><rect x="8.5" y="21.6" width="1.6" height="1.2" fill="#eee"/><g transform="translate(27.3 18.5)"><g fill="#111"><rect x="-1.4" y="-8" width="2.8" height="16"/><rect x="-1.4" y="-8" width="2.8" height="16" transform="rotate(45)"/><rect x="-1.4" y="-8" width="2.8" height="16" transform="rotate(90)"/><rect x="-1.4" y="-8" width="2.8" height="16" transform="rotate(135)"/></g><circle r="6.2" fill="#111"/><circle r="4.6" fill="#fff"/></g></svg>
<svg style="position:absolute;left:1090px;top:5px" width="32" height="32" viewBox="0 0 32 32"><g fill="none" stroke="#111" stroke-width="1.2" stroke-linejoin="round"><path d="M13 26.5 H6.2 V5.2 H16.6 L22.1 10.1 V16.8"/><path d="M16.6 5.2 V10.1 H22.1"/></g><g fill="#777"><rect x="9" y="13.1" width="6.9" height="0.9"/><rect x="9" y="15.5" width="4.6" height="0.9"/><rect x="9" y="17.9" width="3.7" height="0.9"/><rect x="9" y="20.1" width="2.7" height="0.9"/></g><circle cx="20" cy="23.4" r="6.2" fill="#fff" stroke="#111" stroke-width="1.3"/><text x="20" y="27" text-anchor="middle" font-family="'Liberation Sans', sans-serif" font-weight="700" font-size="9.5" fill="#111">£</text></svg>
<svg style="position:absolute;left:1850px;top:8px" width="32" height="32" viewBox="0 0 32 32"><g fill="none" stroke="#222" stroke-width="1.25" stroke-linejoin="round"><path d="M5.9 24.4 H25.1 C23.2 22.4 22.7 20.4 22.7 17.6 V14.8 C22.7 10.6 19.4 7.9 15.5 7.9 C11.6 7.9 8.4 10.6 8.4 14.8 V17.6 C8.4 20.4 7.8 22.4 5.9 24.4 Z"/><circle cx="15.5" cy="5.9" r="1.8"/><path d="M13.1 24.5 V25.3 A2.4 2.4 0 0 0 17.9 25.3 V24.5"/></g></svg>

</body></html>
